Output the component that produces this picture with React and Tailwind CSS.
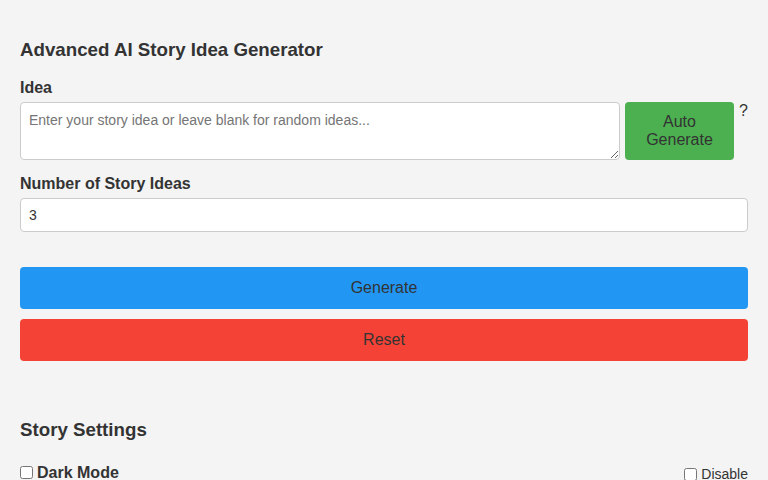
import React, { useState } from 'react';

const App = () => {
  const [idea, setIdea] = useState('');
  const [count, setCount] = useState(3);
  const [dark, setDark] = useState(false);
  const [disable, setDisable] = useState(false);

  return (
    <div className="min-h-screen bg-[#f4f4f4] px-5 pt-[38px] text-[#333]" style={{ fontFamily: '"Liberation Sans", Arial, sans-serif' }}>
      <h2 className="text-[18.72px] font-bold leading-6">Advanced AI Story Idea Generator</h2>

      <label className="mt-[17px] block text-base font-bold leading-[18px]">Idea</label>
      <div className="mt-[5px] flex items-start gap-[5px]">
        <textarea
          value={idea}
          onChange={(e) => setIdea(e.target.value)}
          placeholder="Enter your story idea or leave blank for random ideas..."
          className="h-[58px] flex-1 rounded border border-[#ccc] bg-white px-2 pt-[9px] pb-[5px] text-sm leading-4 placeholder:text-[#757575] focus:outline-none"
        />
        <button className="h-[58px] w-[109px] rounded bg-[#4caf50] text-base leading-[18px] text-[#333]">
          Auto
          <br />
          Generate
        </button>
        <span className="w-[9px] text-base leading-[18px]">?</span>
      </div>

      <label className="mt-[15px] block text-base font-bold leading-[18px]">Number of Story Ideas</label>
      <input
        type="number"
        value={count}
        onChange={(e) => setCount(e.target.value)}
        className="mt-[5px] block h-[34px] w-full rounded border border-[#ccc] bg-white px-2 text-sm focus:outline-none"
      />

      <button className="mt-[35px] block h-[42px] w-full rounded bg-[#2196f3] text-base text-[#333]">Generate</button>
      <button className="mt-[10px] block h-[42px] w-full rounded bg-[#f44336] text-base text-[#333]">Reset</button>

      <h2 className="mt-[57px] text-[18.72px] font-bold leading-6">Story Settings</h2>

      <div className="mt-[21px] flex items-center justify-between">
        <label className="flex items-center gap-[4px] text-base font-bold leading-[18px]">
          <input type="checkbox" checked={dark} onChange={(e) => setDark(e.target.checked)} className="m-0 h-[13px] w-[13px]" />
          Dark Mode
        </label>
        <label className="flex items-center gap-[4px] pt-[3px] text-sm leading-4">
          <input type="checkbox" checked={disable} onChange={(e) => setDisable(e.target.checked)} className="m-0 h-[13px] w-[13px]" />
          Disable
        </label>
      </div>
    </div>
  );
};

export default App;
